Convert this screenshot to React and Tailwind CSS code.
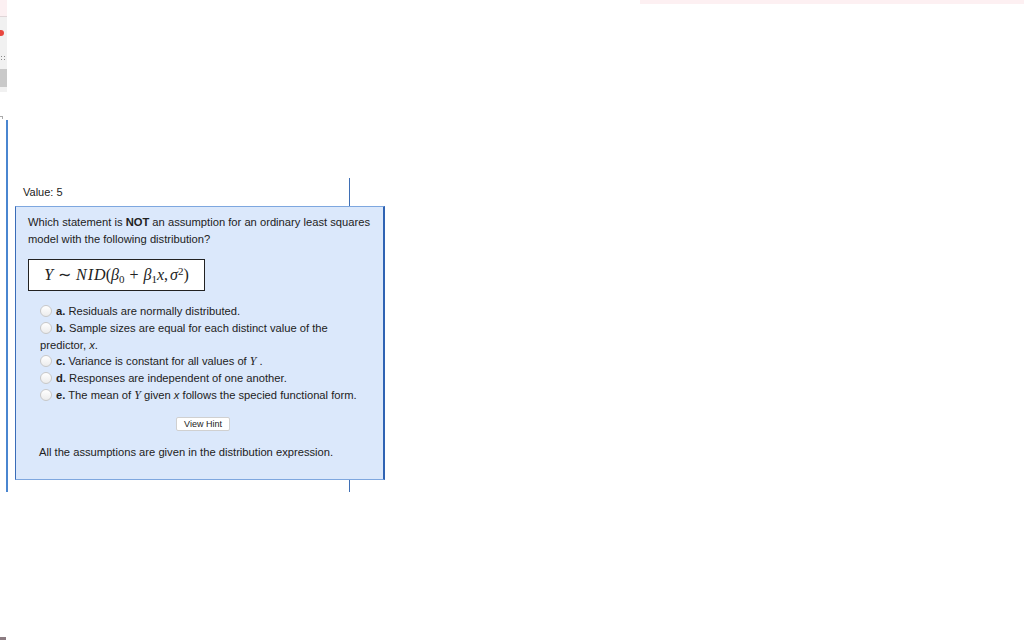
import React from 'react';

const options = [
  { key: 'a', text: 'Residuals are normally distributed.' },
  { key: 'b', text: 'Sample sizes are equal for each distinct value of the predictor, ', tail: <i>x</i>, end: '.' },
  { key: 'c', text: 'Variance is constant for all values of ', tail: <i className="font-['Liberation_Serif',serif] text-[12px]">Y</i>, end: ' .' },
  { key: 'd', text: 'Responses are independent of one another.' },
  { key: 'e', text: 'The mean of ', tail: <><i className="font-['Liberation_Serif',serif] text-[12px]">Y</i> given <i>x</i></>, end: ' follows the specied functional form.' },
];

const Radio = () => (
  <span className="inline-block align-[-2px] w-[12px] h-[12px] rounded-full border border-[#c8c8c8] bg-gradient-to-b from-white to-[#ececec] mr-[4px]" />
);

const Formula = () => (
  <div className="w-[177px] h-[32px] border border-[#222] bg-white flex items-center justify-center font-['Liberation_Serif',serif] text-[16px] leading-[20px] text-[#222]">
    <span className="whitespace-nowrap">
      <i>Y</i>
      <span className="mx-[5px]">∼</span>
      <i>N</i><i className="ml-[1px]">I</i><i className="ml-[1px]">D</i>(<i>β</i>
      <sub className="text-[11px]">0</sub>
      <span className="mx-[5px]">+</span>
      <i>β</i>
      <sub className="text-[11px]">1</sub>
      <i>x</i>,<i className="ml-[2px]">σ</i>
      <sup className="text-[11px]">2</sup>)
    </span>
  </div>
);

export default function App() {
  return (
    <div className="relative w-[1024px] h-[640px] bg-white overflow-hidden font-['Liberation_Sans',Arial,sans-serif] text-[#222]">
      {/* browser chrome remnants */}
      <div className="absolute left-0 top-0 w-[7px] h-[92px] bg-[#f1f1f1] flex flex-col overflow-hidden">
        <div className="h-[17px] bg-[#fcf0f2] border-b border-[#e0d6d8]" />
        <div className="mt-[13px] -ml-[2px] w-[6px] h-[6px] rounded-full bg-[#e8473f]" />
        <div className="mt-[19px] h-[7px] w-[6px] bg-[radial-gradient(#888_1px,transparent_1px)] bg-[length:3px_3px]" />
        <div className="mt-[7px] h-[18px] bg-[#c9c9c9]" />
      </div>
      <div className="absolute left-0 top-[116px] w-[3px] h-[3px] border-t border-r border-[#aaa]" />
      <div className="absolute left-[640px] top-0 right-0 h-[4px] bg-[#fdf0f2]" />
      <div className="absolute left-0 bottom-0 w-[6px] h-[3px] bg-[#8c7c82]" />

      {/* frame lines */}
      <div className="absolute left-[6px] top-[120px] w-[2px] h-[372px] bg-[#4a86d0]" />
      <div className="absolute left-[349px] top-[178px] w-px h-[28px] bg-[#3f6fb5]" />
      <div className="absolute left-[349px] top-[480px] w-px h-[12px] bg-[#3f6fb5]" />

      <div className="pt-[185px] pl-[15px]">
        <div className="pl-[8px] text-[11px] leading-[14px] mb-[7px]">Value: 5</div>

        <div className="relative w-[370px] h-[274px] bg-[#dbe8fb] border-y border-[#7ea7df] border-l border-l-[#3a6cb8] border-r-2 border-r-[#2f63b3] pl-[12px] pt-[7px] text-[11.2px] leading-[17px]">
          <p>
            Which statement is <b>NOT</b> an assumption for an ordinary least squares model with the following distribution?
          </p>

          <div className="mt-[11px]">
            <Formula />
          </div>

          <div className="mt-[12px] pl-[12px] pr-[20px] leading-[16.8px]">
            {options.map((o) => (
              <div key={o.key}>
                <Radio />
                <b>{o.key}.</b> {o.text}
                {o.tail}
                {o.end}
              </div>
            ))}
          </div>

          <div className="mt-[13px] flex justify-center pr-[5px]">
            <button className="h-[14px] px-[7px] bg-white border border-[#d0d0d0] rounded-[2px] text-[9px] leading-[12px] text-[#222]">
              View Hint
            </button>
          </div>

          <p className="mt-[13px] pl-[11px]">All the assumptions are given in the distribution expression.</p>
        </div>
      </div>
    </div>
  );
}
